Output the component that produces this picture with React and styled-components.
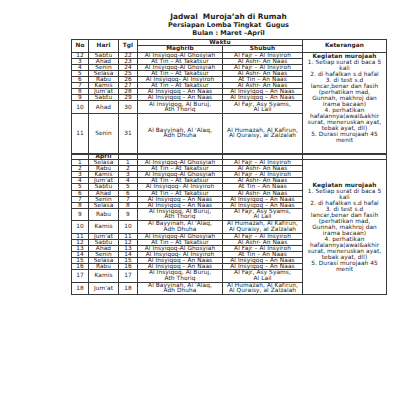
import React from 'react';
import styled, { createGlobalStyle } from 'styled-components';

const GlobalStyle = createGlobalStyle`
  html, body {
    margin: 0;
    padding: 0;
    background: #ffffff;
  }
  body {
    font-family: "DejaVu Sans", "Liberation Sans", sans-serif;
    color: #222222;
  }
`;

const Page = styled.div`
  width: 419px;
  height: 419px;
  padding: 11.5px 0 0 71px;
  box-sizing: border-box;
  overflow: hidden;
`;

const Sheet = styled.div`
  width: 315px;
  display: flex;
  flex-direction: column;
`;

const TitleBlock = styled.div`
  display: flex;
  flex-direction: column;
  align-items: center;
  margin-bottom: 2px;
`;

const TitleLine = styled.div`
  font-weight: 700;
  font-size: ${(p) => p.$size}px;
  line-height: ${(p) => p.$lh}px;
  white-space: pre;
  color: #1e1e1e;
`;

const Table = styled.table`
  border-collapse: collapse;
  table-layout: fixed;
  width: 315px;
  font-size: 5.8px;
  letter-spacing: 0.1px;
`;

const Row = styled.tr`
  height: ${(p) => p.$h || 6.1}px;
`;

const Cell = styled.td`
  border: 1px solid #3a3a3a;
  padding: 0 1px;
  text-align: center;
  vertical-align: middle;
  line-height: ${(p) => (p.$lh === undefined ? 5 : p.$lh)}px;
  font-weight: ${(p) => (p.$bold ? 700 : 400)};
  white-space: nowrap;
  overflow: hidden;
`;

const HeadCell = styled(Cell).attrs({ as: 'th' })`
  font-weight: 700;
`;

const NoteCell = styled.td`
  border: 1px solid #3a3a3a;
  padding: 0 1px;
  text-align: center;
  vertical-align: ${(p) => p.$valign || 'middle'};
  line-height: 6px;
  white-space: nowrap;
`;

const NoteLine = styled.div`
  font-weight: ${(p) => (p.$bold ? 700 : 400)};
`;

const march = [
  ['12', 'Sabtu', '22', ['Al Insyiqoq-Al Ghosyiah'], ['Al Fajr – Al Insyiroh']],
  ['3', 'Ahad', '23', ['At Tin – At Takatsur'], ['Al Ashr- An Naas']],
  ['4', 'Senin', '24', ['Al Insyiqoq-Al Ghosyiah'], ['Al Fajr – Al Insyiroh']],
  ['5', 'Selasa', '25', ['At Tin – At Takatsur'], ['Al Ashr- An Naas']],
  ['6', 'Rabu', '26', ['Al Insyiqoq- Al Insyiroh'], ['At Tin – An Naas']],
  ['7', 'Kamis', '27', ['At Tin – At Takatsur'], ['Al Ashr- An Naas']],
  ['8', "Jum'at", '28', ['Al Insyiqoq – An Naas'], ['Al Insyiqoq – An Naas']],
  ['9', 'Sabtu', '29', ['Al Insyiqoq – An Naas'], ['Al Insyiqoq – An Naas']],
  ['10', 'Ahad', '30', ['Al Insyiqoq, Al Buruj,', 'Ath Thoriq'], ['Al Fajr, Asy Syams,', 'Al Lail']],
  ['11', 'Senin', '31', ["Al Bayyinah, Al 'Alaq,", 'Adh Dhuha'], ['Al Humazah, Al Kafirun,', 'Al Quraisy, al Zalzalah'], 40],
];

const april = [
  ['1', 'Selasa', '1', ['Al Insyiqoq-Al Ghosyiah'], ['Al Fajr – Al Insyiroh']],
  ['2', 'Rabu', '2', ['At Tin – At Takatsur'], ['Al Ashr- An Naas']],
  ['3', 'Kamis', '3', ['Al Insyiqoq-Al Ghosyiah'], ['Al Fajr – Al Insyiroh']],
  ['4', "Jum'at", '4', ['At Tin – At Takatsur'], ['Al Ashr- An Naas']],
  ['5', 'Sabtu', '5', ['Al Insyiqoq- Al Insyiroh'], ['At Tin – An Naas']],
  ['6', 'Ahad', '6', ['At Tin – At Takatsur'], ['Al Ashr- An Naas']],
  ['7', 'Senin', '7', ['Al Insyiqoq – An Naas'], ['Al Insyiqoq – An Naas']],
  ['8', 'Selasa', '8', ['Al Insyiqoq – An Naas'], ['Al Insyiqoq – An Naas']],
  ['9', 'Rabu', '9', ['Al Insyiqoq, Al Buruj,', 'Ath Thoriq'], ['Al Fajr, Asy Syams,', 'Al Lail']],
  ['10', 'Kamis', '10', ["Al Bayyinah, Al 'Alaq,", 'Adh Dhuha'], ['Al Humazah, Al Kafirun,', 'Al Quraisy, al Zalzalah']],
  ['11', "Jum'at", '11', ['Al Insyiqoq-Al Ghosyiah'], ['Al Fajr – Al Insyiroh']],
  ['12', 'Sabtu', '12', ['At Tin – At Takatsur'], ['Al Ashr- An Naas']],
  ['13', 'Ahad', '13', ['Al Insyiqoq-Al Ghosyiah'], ['Al Fajr – Al Insyiroh']],
  ['14', 'Senin', '14', ['Al Insyiqoq- Al Insyiroh'], ['At Tin – An Naas']],
  ['15', 'Selasa', '15', ['Al Insyiqoq – An Naas'], ['Al Insyiqoq – An Naas']],
  ['16', 'Rabu', '16', ['Al Insyiqoq – An Naas'], ['Al Insyiqoq – An Naas']],
  ['17', 'Kamis', '17', ['Al Insyiqoq, Al Buruj,', 'Ath Thoriq'], ['Al Fajr, Asy Syams,', 'Al Lail']],
  ['18', "Jum'at", '18', ["Al Bayyinah, Al 'Alaq,", 'Adh Dhuha'], ['Al Humazah, Al Kafirun,', 'Al Quraisy, al Zalzalah']],
];

const notes = [
  'Kegiatan murojaah',
  '1. Setiap surat di baca 5',
  'kali',
  '2. di hafalkan s.d hafal',
  '3. di test s.d',
  'lancar,benar dan fasih',
  '(perhatikan mad,',
  'Gunnah, makhroj dan',
  'irama bacaan)',
  '4. perhatikan',
  'hafalannya(awal&akhir',
  'surat, meneruskan ayat,',
  'tebak ayat, dll)',
  '5. Durasi murojaah 45',
  'menit',
];

function Lines({ items }) {
  return items.map((t, i) => (
    <React.Fragment key={i}>
      {i > 0 && <br />}
      {t}
    </React.Fragment>
  ));
}

function Notes() {
  return notes.map((t, i) => (
    <NoteLine key={i} $bold={i === 0}>
      {t}
    </NoteLine>
  ));
}

function DayRow({ day, note }) {
  const [no, hari, tgl, maghrib, shubuh, h] = day;
  const double = maghrib.length > 1;
  return (
    <Row $h={h || (double ? 12.4 : 6.1)}>
      <Cell>{no}</Cell>
      <Cell>{hari}</Cell>
      <Cell>{tgl}</Cell>
      <Cell $lh={double ? 5.5 : 5}>
        <Lines items={maghrib} />
      </Cell>
      <Cell $lh={double ? 5.5 : 5}>
        <Lines items={shubuh} />
      </Cell>
      {note}
    </Row>
  );
}

export default function App() {
  return (
    <>
      <GlobalStyle />
      <Page>
        <Sheet>
          <TitleBlock>
            <TitleLine $size={7.4} $lh={9}>Jadwal  Muroja’ah di Rumah</TitleLine>
            <TitleLine $size={6.5} $lh={8.5}>Persiapan Lomba Tingkat  Gugus</TitleLine>
            <TitleLine $size={6.5} $lh={8}>Bulan : Maret –April</TitleLine>
          </TitleBlock>
          <Table>
            <colgroup>
              <col style={{ width: 17 }} />
              <col style={{ width: 30 }} />
              <col style={{ width: 19 }} />
              <col style={{ width: 85 }} />
              <col style={{ width: 80 }} />
              <col style={{ width: 84 }} />
            </colgroup>
            <thead>
              <Row $h={6.3}>
                <HeadCell rowSpan={2}>No</HeadCell>
                <HeadCell rowSpan={2}>Hari</HeadCell>
                <HeadCell rowSpan={2}>Tgl</HeadCell>
                <HeadCell colSpan={2}>Waktu</HeadCell>
                <HeadCell rowSpan={2}>Keterangan</HeadCell>
              </Row>
              <Row $h={6.3}>
                <HeadCell>Maghrib</HeadCell>
                <HeadCell>Shubuh</HeadCell>
              </Row>
            </thead>
            <tbody>
              {march.map((d, i) => (
                <DayRow
                  key={`m${i}`}
                  day={d}
                  note={
                    i === 0 ? (
                      <NoteCell rowSpan={march.length} $valign="top">
                        <Notes />
                      </NoteCell>
                    ) : null
                  }
                />
              ))}
              <Row $h={1.6}>
                <Cell $lh={0} />
                <Cell $lh={0} />
                <Cell $lh={0} />
                <Cell $lh={0} />
                <Cell $lh={0} />
                <Cell $lh={0} />
              </Row>
              <Row $h={4.7}>
                <Cell $lh={3.7} />
                <Cell $lh={3.7} $bold>April</Cell>
                <Cell $lh={3.7} />
                <Cell $lh={3.7} />
                <Cell $lh={3.7} />
                <Cell $lh={3.7} />
              </Row>
              {april.map((d, i) => (
                <DayRow
                  key={`a${i}`}
                  day={d}
                  note={
                    i === 0 ? (
                      <NoteCell rowSpan={april.length}>
                        <Notes />
                      </NoteCell>
                    ) : null
                  }
                />
              ))}
            </tbody>
          </Table>
        </Sheet>
      </Page>
    </>
  );
}
